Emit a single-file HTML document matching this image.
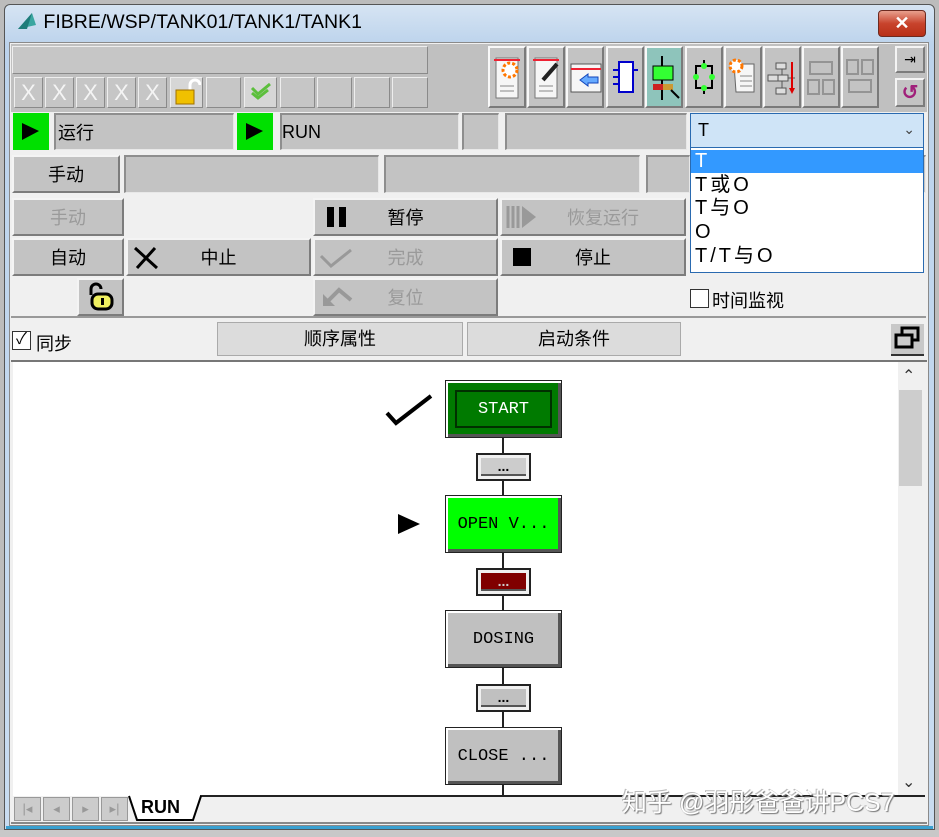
<!DOCTYPE html>
<html><head><meta charset="utf-8">
<style>
*{margin:0;padding:0;box-sizing:border-box}
body{width:939px;height:837px;background:#bcbcbc;position:relative;overflow:hidden;font-family:"Liberation Sans","Noto Sans CJK SC",sans-serif;font-size:18px;color:#000}
.a{position:absolute}
.g{background:#c0c0c0}
.btn{position:absolute;background:#c3c3c3;border-top:2px solid #f4f4f4;border-left:2px solid #f4f4f4;border-right:2px solid #7c7c7c;border-bottom:2px solid #7c7c7c;display:flex;align-items:center;justify-content:center}
.dis{color:#9a9a9a}
.box{position:absolute;background:#c3c3c3;border-left:2px solid #8e8e8e;border-top:2px solid #8e8e8e;border-right:1px solid #e8e8e8;border-bottom:1px solid #e8e8e8}
.xb{position:absolute;top:77px;width:29px;height:31px;background:#c6c6c6;border:1px solid #8a8a8a;border-top-color:#eee;border-left-color:#eee;color:#f4f4f4;font-size:22px;text-align:center;line-height:29px}
.tb{position:absolute;top:46px;width:38px;height:62px;background:#c3c3c3;border-top:2px solid #f8f8f8;border-left:2px solid #f8f8f8;border-right:2px solid #7a7a7a;border-bottom:2px solid #7a7a7a}
.step{position:absolute;left:445px;width:117px;height:58px;border:1px solid #222;box-shadow:inset 2px 2px 0 #fff,inset -3px -3px 0 #555;font-family:"Liberation Mono",monospace;font-size:17px;display:flex;align-items:center;justify-content:center}
.tr{position:absolute;left:476px;width:55px;height:28px;border:2px solid #222;background:#f0f0f0}
.tr i{position:absolute;left:3px;top:3px;right:3px;bottom:3px;border-bottom:2px solid #555;font-style:normal;font-size:14px;font-weight:bold;text-align:center;line-height:16px}
</style></head><body>
<div class="a" style="left:4px;top:4px;width:931px;height:826px;background:linear-gradient(#d6e4f3,#bcd3ec 40px,#c9dcf0);border:1px solid #555;border-radius:6px 6px 0 0"></div>
<div class="a" style="left:16px;top:11px;font-size:19.5px;color:#000">
<svg width="22" height="20" style="vertical-align:-3px"><path d="M2 18 L16 2 L20 14 Z" fill="#3aa6a0"/><path d="M2 18 L16 2 L11 18Z" fill="#1f7c7a"/></svg> FIBRE/WSP/TANK01/TANK1/TANK1</div>
<div class="a" style="left:878px;top:10px;width:48px;height:27px;border-radius:4px;background:linear-gradient(#e8a08e,#c8432c 50%,#b83018);border:1px solid #6d2a20;color:#fff;font-weight:bold;font-size:18px;text-align:center;line-height:24px">✕</div>
<div class="a" style="left:9px;top:42px;width:920px;height:784px;background:#f0f0f0;border:1px solid #8a8a8a"></div>
<div class="a g" style="left:11px;top:44px;width:916px;height:68px;background:#c0c0c0"></div>
<div class="a" style="left:12px;top:46px;width:416px;height:28px;background:#c6c6c6;border:1px solid #8a8a8a;border-top-color:#eee;border-left-color:#eee"></div>
<div class="xb" style="left:14px">X</div><div class="xb" style="left:45px">X</div><div class="xb" style="left:76px">X</div><div class="xb" style="left:107px">X</div><div class="xb" style="left:138px">X</div>
<div class="xb" style="left:170px;width:33px;background:#d6d6d6"><svg width="28" height="28"><path d="M17 13 V7 a5 5 0 0 1 10 0" stroke="#fff" stroke-width="3" fill="none"/><rect x="3" y="12" width="18" height="14" fill="#f0c000" stroke="#a07000"/></svg></div>
<div class="xb" style="left:206px;width:35px"></div>
<div class="xb" style="left:244px;width:33px;background:#d6d6d6"><svg width="26" height="20"><path d="M4 8 L10 14 L22 4 M4 13 L10 18 L20 10" stroke="#5cbf3c" stroke-width="3" fill="none"/></svg></div>
<div class="xb" style="left:280px;width:35px"></div><div class="xb" style="left:317px;width:35px"></div><div class="xb" style="left:354px;width:36px"></div><div class="xb" style="left:392px;width:36px"></div>
<div class="tb" style="left:488px"><svg width="34" height="58"><rect x="6" y="10" width="22" height="40" fill="#f6f6f6" stroke="#777"/><path d="M4 12 H30" stroke="#e23" stroke-width="2"/><circle cx="20" cy="22" r="7" fill="#fff" stroke="#f70" stroke-width="3" stroke-dasharray="3 2"/><path d="M10 38H24M10 43H24" stroke="#888"/></svg></div>
<div class="tb" style="left:527px"><svg width="34" height="58"><rect x="6" y="10" width="22" height="40" fill="#f6f6f6" stroke="#777"/><path d="M4 12 H30" stroke="#e23" stroke-width="2"/><path d="M14 32 L28 16" stroke="#222" stroke-width="4"/><path d="M10 38H24M10 43H24" stroke="#888"/></svg></div>
<div class="tb" style="left:566px"><svg width="36" height="58"><rect x="3" y="16" width="30" height="28" fill="#f6f6f6" stroke="#555"/><path d="M3 21H33" stroke="#e23" stroke-width="2"/><path d="M12 32 L20 26 V29 H30 V35 H20 V38Z" fill="#6af" stroke="#14b"/></svg></div>
<div class="tb" style="left:606px"><svg width="34" height="58"><rect x="11" y="14" width="14" height="30" fill="#fff" stroke="#00c" stroke-width="2"/><path d="M5 22H11M5 29H11M5 36H11M25 22H30" stroke="#00c" stroke-width="2"/></svg></div>
<div class="tb" style="left:645px;background:#8ec4bb"><svg width="34" height="58"><path d="M15 8V52" stroke="#000" stroke-width="2"/><rect x="6" y="18" width="20" height="14" fill="#3f3" stroke="#000"/><rect x="6" y="36" width="10" height="6" fill="#c22"/><rect x="16" y="36" width="10" height="6" fill="#c93"/><path d="M24 42 L32 50" stroke="#000" stroke-width="2"/></svg></div>
<div class="tb" style="left:685px"><svg width="34" height="58"><path d="M8 18H26M8 40H26M9 18V40M25 18V40M17 12V18M17 40V46" stroke="#000" stroke-width="2"/><circle cx="17" cy="18" r="3" fill="#3f3"/><circle cx="17" cy="40" r="3" fill="#3f3"/><circle cx="9" cy="29" r="3" fill="#3f3"/><circle cx="25" cy="29" r="3" fill="#3f3"/></svg></div>
<div class="tb" style="left:724px"><svg width="34" height="58"><path d="M8 16 H28 V44 H10 Z" fill="#f6f6f6" stroke="#666"/><circle cx="10" cy="18" r="6" fill="#fff" stroke="#f70" stroke-width="3" stroke-dasharray="3 2"/><path d="M14 28H26M14 33H26M14 38H26" stroke="#888"/></svg></div>
<div class="tb" style="left:763px"><svg width="34" height="58"><path d="M4 30H30M17 18V46" stroke="#555"/><rect x="11" y="15" width="10" height="6" fill="#ddd" stroke="#555"/><rect x="3" y="27" width="10" height="6" fill="#ddd" stroke="#555"/><rect x="13" y="27" width="10" height="6" fill="#ddd" stroke="#555"/><rect x="11" y="40" width="10" height="6" fill="#ddd" stroke="#555"/><path d="M27 14V42" stroke="#d00" stroke-width="2"/><path d="M24 40 L27 46 L30 40Z" fill="#d00"/></svg></div>
<div class="tb" style="left:802px"><svg width="34" height="58" opacity=".5"><rect x="6" y="14" width="22" height="12" fill="none" stroke="#666" stroke-width="2"/><rect x="4" y="32" width="11" height="14" fill="none" stroke="#666" stroke-width="2"/><rect x="19" y="32" width="11" height="14" fill="none" stroke="#666" stroke-width="2"/></svg></div>
<div class="tb" style="left:841px"><svg width="34" height="58" opacity=".5"><rect x="4" y="12" width="11" height="14" fill="none" stroke="#666" stroke-width="2"/><rect x="19" y="12" width="11" height="14" fill="none" stroke="#666" stroke-width="2"/><rect x="6" y="32" width="22" height="12" fill="none" stroke="#666" stroke-width="2"/></svg></div>
<div class="btn" style="left:895px;top:46px;width:30px;height:27px;font-size:14px">⇥</div>
<div class="btn" style="left:895px;top:78px;width:30px;height:29px;color:#a0207a;font-size:20px;font-weight:bold">↺</div>
<div class="a" style="left:13px;top:113px;width:36px;height:37px;background:#00e000"><svg width="36" height="37"><path d="M9 10 L26 18 L9 27Z" fill="#000"/></svg></div>
<div class="box" style="left:54px;top:113px;width:180px;height:37px;padding-left:2px;line-height:36px">运行</div>
<div class="a" style="left:237px;top:113px;width:36px;height:37px;background:#00e000"><svg width="36" height="37"><path d="M9 10 L26 18 L9 27Z" fill="#000"/></svg></div>
<div class="box" style="left:280px;top:113px;width:179px;height:37px;line-height:34px">RUN</div>
<div class="box" style="left:462px;top:113px;width:37px;height:37px"></div>
<div class="box" style="left:505px;top:113px;width:182px;height:37px"></div>
<div class="a" style="left:690px;top:113px;width:234px;height:35px;background:#cfe4f7;border:1px solid #2a6ab0;padding-left:7px;line-height:33px">T<span style="position:absolute;right:8px;top:-1px;font-size:14px;color:#444">⌄</span></div>
<div class="btn" style="left:12px;top:155px;width:108px;height:38px">手动</div>
<div class="box" style="left:124px;top:155px;width:255px;height:38px"></div>
<div class="box" style="left:384px;top:155px;width:256px;height:38px"></div>
<div class="box" style="left:646px;top:155px;width:44px;height:38px"></div>
<div class="box" style="left:918px;top:155px;width:8px;height:38px"></div>
<div class="btn dis" style="left:12px;top:198px;width:112px;height:38px">手动</div>
<div class="btn" style="left:313px;top:198px;width:185px;height:38px"><span style="position:absolute;left:12px;top:7px;width:7px;height:20px;background:#000"></span><span style="position:absolute;left:24px;top:7px;width:7px;height:20px;background:#000"></span>暂停</div>
<div class="btn dis" style="left:500px;top:198px;width:186px;height:38px"><svg class="a" style="left:2px;top:4px" width="36" height="26"><path d="M4 2V24M9 2V24M14 2V24" stroke="#999" stroke-width="3"/><path d="M18 2 L32 13 L18 24Z" fill="#999"/></svg><span style="margin-left:20px">恢复运行</span></div>
<div class="btn" style="left:12px;top:238px;width:112px;height:38px">自动</div>
<div class="btn" style="left:126px;top:238px;width:185px;height:38px"><svg class="a" style="left:3px;top:4px" width="30" height="28"><path d="M4 4 L26 24 M24 4 L6 24" stroke="#000" stroke-width="3"/></svg>中止</div>
<div class="btn dis" style="left:313px;top:238px;width:185px;height:38px"><svg class="a" style="left:4px;top:6px" width="34" height="24"><path d="M2 10 L12 20 L32 4" stroke="#999" stroke-width="3" fill="none"/></svg>完成</div>
<div class="btn" style="left:500px;top:238px;width:186px;height:38px"><span style="position:absolute;left:11px;top:8px;width:18px;height:18px;background:#000"></span>停止</div>
<div class="btn" style="left:77px;top:278px;width:47px;height:38px"><svg width="32" height="32"><path d="M6 14 V8 a5 5 0 0 1 10 0" stroke="#000" stroke-width="3" fill="none"/><rect x="7" y="13" width="20" height="15" rx="6" fill="#f0f060" stroke="#000" stroke-width="3"/><rect x="16" y="17" width="3" height="7" fill="#000"/></svg></div>
<div class="btn dis" style="left:313px;top:278px;width:185px;height:38px"><svg class="a" style="left:4px;top:4px" width="36" height="26"><path d="M4 10 V22 H16Z" fill="#999"/><path d="M8 18 L20 6 L32 16" stroke="#999" stroke-width="4" fill="none"/></svg>复位</div>
<div class="a" style="left:690px;top:289px;width:19px;height:19px;border:1px solid #333;background:#fff"></div>
<div class="a" style="left:712px;top:287px">时间监视</div>
<div class="a" style="left:11px;top:316px;width:915px;height:2px;background:#999"></div>
<div class="a" style="left:12px;top:331px;width:19px;height:19px;border:1px solid #333;background:#fff;font-size:16px;line-height:16px;text-align:center">✓</div>
<div class="a" style="left:36px;top:330px">同步</div>
<div class="a" style="left:217px;top:322px;width:246px;height:34px;background:#dcdcdc;border:1px solid #aaa;text-align:center;line-height:33px">顺序属性</div>
<div class="a" style="left:467px;top:322px;width:214px;height:34px;background:#dcdcdc;border:1px solid #aaa;text-align:center;line-height:33px">启动条件</div>
<div class="a" style="left:891px;top:324px;width:33px;height:32px;background:#c8c8c8;border-bottom:2px solid #333"><svg width="33" height="30"><rect x="11" y="4" width="16" height="12" fill="none" stroke="#000" stroke-width="3"/><rect x="5" y="11" width="16" height="12" fill="#ccc" stroke="#000" stroke-width="3"/></svg></div>
<div class="a" style="left:11px;top:360px;width:916px;height:2px;background:#777"></div>
<div class="a" style="left:13px;top:362px;width:885px;height:434px;background:#fff"></div>
<div class="a" style="left:898px;top:362px;width:26px;height:434px;background:#f0f0f0"></div>
<div class="a" style="left:899px;top:390px;width:23px;height:96px;background:#cdcdcd"></div>
<div class="a" style="left:902px;top:366px;font-size:16px;color:#333">⌃</div>
<div class="a" style="left:902px;top:772px;font-size:16px;color:#333">⌄</div>
<div class="a" style="left:502px;top:437px;width:2px;height:358px;background:#222"></div>
<svg class="a" style="left:384px;top:393px" width="50" height="36"><path d="M3 20 L12 30 L47 3" stroke="#000" stroke-width="4" fill="none"/></svg>
<div class="step" style="top:380px;background:#007a00"><div style="width:97px;height:38px;border:2px solid #003000;color:#fff;display:flex;align-items:center;justify-content:center">START</div></div>
<div class="tr" style="top:453px"><i style="background:#ccc">...</i></div>
<svg class="a" style="left:396px;top:512px" width="26" height="24"><path d="M2 2 L24 12 L2 22Z" fill="#000"/></svg>
<div class="step" style="top:495px;background:#00ff00">OPEN V...</div>
<div class="tr" style="top:568px"><i style="background:#800000;color:#ccc">...</i></div>
<div class="step" style="top:610px;background:#c0c0c0">DOSING</div>
<div class="tr" style="top:684px"><i style="background:#c0c0c0">...</i></div>
<div class="step" style="top:727px;background:#c0c0c0">CLOSE ...</div>
<div class="a" style="left:13px;top:796px;width:912px;height:26px;background:#f0f0f0"></div>
<div class="a" style="left:200px;top:795px;width:725px;height:2px;background:#222"></div>
<div class="a" style="left:14px;top:797px;width:114px;height:24px;display:flex;gap:2px">
<div style="flex:1;background:#ccc;border:1px solid #999;color:#999;font-size:13px;text-align:center;line-height:22px">|◂</div><div style="flex:1;background:#ccc;border:1px solid #999;color:#999;font-size:13px;text-align:center;line-height:22px">◂</div><div style="flex:1;background:#ccc;border:1px solid #999;color:#999;font-size:13px;text-align:center;line-height:22px">▸</div><div style="flex:1;background:#ccc;border:1px solid #999;color:#999;font-size:13px;text-align:center;line-height:22px">▸|</div></div>
<svg class="a" style="left:127px;top:794px" width="80" height="30"><path d="M2 2 L10 26 H66 L74 2" fill="#fff" stroke="#000" stroke-width="2"/></svg>
<div class="a" style="left:141px;top:797px;font-weight:bold;font-size:18px">RUN</div>
<div class="a" style="left:11px;top:822px;width:916px;height:2px;background:#888"></div>
<div class="a" style="left:6px;top:826px;width:927px;height:3px;background:#3aa0d0"></div>
<div class="a" style="left:0;top:830px;width:939px;height:7px;background:#c8c8c8"></div>
<div class="a" style="left:622px;top:783px;font-size:25px;color:#fff;text-shadow:1px 1px 1px #777,-1px -1px 0 #bbb">知乎 @羽彤爸爸讲PCS7</div>
<div class="a" style="left:690px;top:148px;width:234px;height:125px;background:#fff;border:1px solid #2a6ab0;border-top:none;font-size:20px;line-height:25px;padding-left:4px;letter-spacing:3px">
<div style="background:#3399ff;color:#fff;margin:2px 0 0 -4px;padding-left:4px;height:23px;line-height:22px">T</div>
<div>T或O</div><div style="margin-top:-2px">T与O</div><div style="margin-top:-1px">O</div><div style="margin-top:-1px">T/T与O</div></div>
</body></html>
